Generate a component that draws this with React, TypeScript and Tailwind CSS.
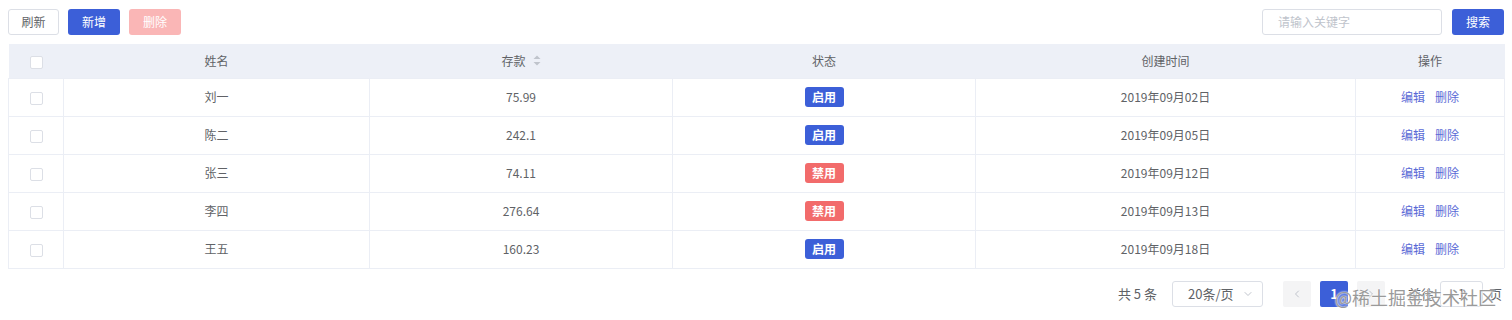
import { ChevronDown, ChevronLeft, ChevronRight } from 'lucide-react';

type Row = { name: string; amount: string; enabled: boolean; date: string };

const rows: Row[] = [
  { name: '刘一', amount: '75.99', enabled: true, date: '2019年09月02日' },
  { name: '陈二', amount: '242.1', enabled: true, date: '2019年09月05日' },
  { name: '张三', amount: '74.11', enabled: false, date: '2019年09月12日' },
  { name: '李四', amount: '276.64', enabled: false, date: '2019年09月13日' },
  { name: '王五', amount: '160.23', enabled: true, date: '2019年09月18日' },
];

const font = { fontFamily: '"Noto Sans CJK SC", "Noto Sans", sans-serif' };

function Checkbox() {
  return <span className="inline-block w-[13px] h-[13px] rounded-[2px] border border-[#dcdfe6] bg-white align-middle" />;
}

export default function App() {
  return (
    <div className="relative w-[1512px] h-[320px] bg-white text-[#606266] text-[12px]" style={font}>
      {/* Toolbar */}
      <div className="flex items-center justify-between px-2 pt-2 h-[36px]">
        <div className="flex items-center gap-[9px]">
          <button className="w-[51px] h-[26px] rounded-[3px] border border-[#dcdfe6] bg-white text-[#606266]">刷新</button>
          <button className="w-[52px] h-[26px] rounded-[3px] bg-[#3c5fd8] text-white">新增</button>
          <button className="w-[52px] h-[26px] rounded-[3px] bg-[#fab6b6] text-white">删除</button>
        </div>
        <div className="flex items-center gap-[10px]">
          <div className="w-[180px] h-[26px] rounded-[3px] border border-[#dcdfe6] flex items-center px-[15px] text-[#c0c4cc]">请输入关键字</div>
          <button className="w-[52px] h-[26px] rounded-[3px] bg-[#3c5fd8] text-white">搜索</button>
        </div>
      </div>

      {/* Table */}
      <div className="mx-2 mt-[8px] border-b border-[#ebeef5]">
        <table className="w-[1496px] table-fixed border-collapse">
          <colgroup>
            <col className="w-[55px]" />
            <col className="w-[306px]" />
            <col className="w-[303px]" />
            <col className="w-[303px]" />
            <col className="w-[380px]" />
            <col className="w-[149px]" />
          </colgroup>
          <thead>
            <tr className="h-[34px] bg-[#edf0f7] text-[#606266]">
              <th className="font-normal"><Checkbox /></th>
              <th className="font-normal">姓名</th>
              <th className="font-normal">
                <span className="inline-flex items-center gap-[5px]">
                  存款
                  <svg width="8" height="11" viewBox="0 0 8 11" className="ml-[2px]">
                    <path d="M4 0.5 L7.5 4 H0.5 Z" fill="#c0c4cc" />
                    <path d="M4 10.5 L7.5 7 H0.5 Z" fill="#c0c4cc" />
                  </svg>
                </span>
              </th>
              <th className="font-normal">状态</th>
              <th className="font-normal">创建时间</th>
              <th className="font-normal">操作</th>
            </tr>
          </thead>
          <tbody>
            {rows.map((r) => (
              <tr key={r.name} className="h-[38px] border-t border-[#ebeef5]">
                <td className="text-center border-l border-r border-[#ebeef5]"><Checkbox /></td>
                <td className="text-center border-r border-[#ebeef5]">{r.name}</td>
                <td className="text-center border-r border-[#ebeef5]">{r.amount}</td>
                <td className="text-center border-r border-[#ebeef5]">
                  <span
                    className={`inline-flex items-center justify-center w-[39px] h-[20px] rounded-[3px] text-white font-bold ${
                      r.enabled ? 'bg-[#3c5fd8]' : 'bg-[#f26b6b]'
                    }`}
                  >
                    {r.enabled ? '启用' : '禁用'}
                  </span>
                </td>
                <td className="text-center border-r border-[#ebeef5]">{r.date}</td>
                <td className="text-center border-r border-[#ebeef5] text-[#5b6ad6]">
                  <span className="mr-[10px]">编辑</span>
                  <span>删除</span>
                </td>
              </tr>
            ))}
          </tbody>
        </table>
      </div>

      {/* Pagination */}
      <div className="flex items-center justify-end pr-[10px] mt-[12px] h-[26px] text-[13px]">
        <span className="mr-[15px]">共 5 条</span>
        <div className="w-[91px] h-[26px] rounded-[3px] border border-[#dcdfe6] flex items-center justify-between pl-[15px] pr-[8px] mr-[20px]">
          <span>20条/页</span>
          <ChevronDown className="w-[12px] h-[12px] text-[#c0c4cc]" />
        </div>
        <div className="w-[28px] h-[26px] rounded-[2px] bg-[#f4f4f5] flex items-center justify-center mr-[9px]">
          <ChevronLeft className="w-[12px] h-[12px] text-[#c0c4cc]" />
        </div>
        <div className="w-[28px] h-[26px] rounded-[2px] bg-[#3c5fd8] text-white font-bold flex items-center justify-center mr-[9px]">1</div>
        <div className="w-[28px] h-[26px] rounded-[2px] bg-[#f4f4f5] flex items-center justify-center mr-[23px]">
          <ChevronRight className="w-[12px] h-[12px] text-[#c0c4cc]" />
        </div>
        <span className="mr-[6px]">前往</span>
        <div className="w-[43px] h-[26px] rounded-[3px] border border-[#dcdfe6] flex items-center justify-center mr-[6px]">1</div>
        <span>页</span>
      </div>

      {/* Watermark */}
      <div className="absolute left-[1335px] top-[284px] text-[18px] text-[#9a9a9a] [text-shadow:0_0_2px_#fff,0_0_2px_#fff]">
        @稀土掘金技术社区
      </div>
    </div>
  );
}
